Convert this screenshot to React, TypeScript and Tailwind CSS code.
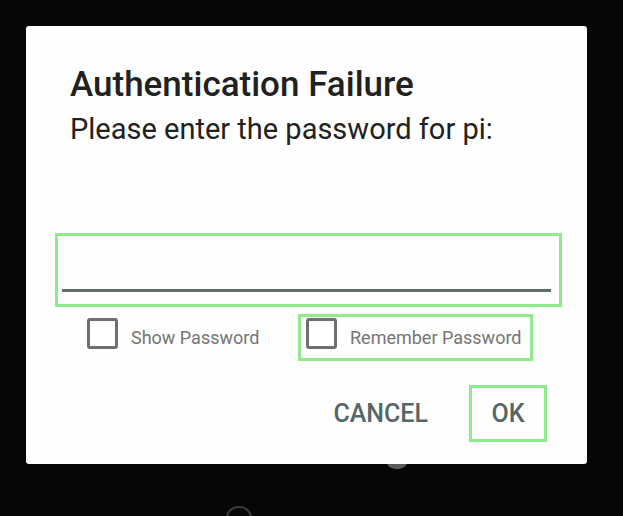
import React from "react";

const font = { fontFamily: "Roboto, 'Noto Sans', sans-serif" };

function Box() {
  return <span className="block h-[31px] w-[31px] shrink-0 rounded-[3px] border-[3px] border-[#6f6f6f] bg-white" />;
}

export default function App() {
  return (
    <div className="relative h-[516px] w-full overflow-hidden bg-[#060606]" style={font}>
      {/* faint stuff peeking behind the dialog */}
      <div className="absolute left-[386px] top-[450px] h-[19px] w-[22px] rounded-full bg-[#5a5a5a]" />
      <div className="absolute left-[226px] top-[506px] h-[24px] w-[26px] rounded-full border-2 border-[#3a3a3a]" />

      <div className="relative ml-[26px] mt-[26px] flex h-[438px] w-[561px] flex-col rounded-[3px] bg-[#fdfefd] px-[29px] pt-[38px]">
        <div className="pl-[15px]">
          <h1 className="text-[35px] font-medium leading-[41px] text-[#212121]">Authentication Failure</h1>
          <p className="mt-[7px] text-[29px] leading-[34px] text-[#212121]">Please enter the password for pi:</p>
        </div>

        <div className="mt-[87px] h-[74px] w-[507px] border-[3px] border-[#8fea8f] pl-[4px] pr-[8px] pt-[53px]">
          <div className="h-[3px] w-full bg-[#5f6d6d]" />
        </div>

        <div className="mt-[7px] flex items-start">
          <label className="ml-[32px] flex w-[211px] pt-[4px] text-[18px] leading-[31px] text-[#757575]">
            <Box />
            <span className="ml-[13px] mt-[4px]">Show Password</span>
          </label>
          <label className="flex h-[47px] w-[235px] border-[3px] border-[#8fea8f] pl-[5px] pt-[1px] text-[18px] leading-[31px] text-[#757575]">
            <Box />
            <span className="ml-[13px] mt-[4px]">Remember Password</span>
          </label>
        </div>

        <div className="mt-[24px] flex justify-end pr-[11px]">
          <button className="mr-[29px] h-[57px] px-[12px] text-[25px] font-medium leading-[57px] text-[#566666]">CANCEL</button>
          <button className="h-[57px] w-[78px] border-[3px] border-[#8fea8f] text-[25px] font-medium leading-[51px] text-[#566666]">OK</button>
        </div>
      </div>
    </div>
  );
}
